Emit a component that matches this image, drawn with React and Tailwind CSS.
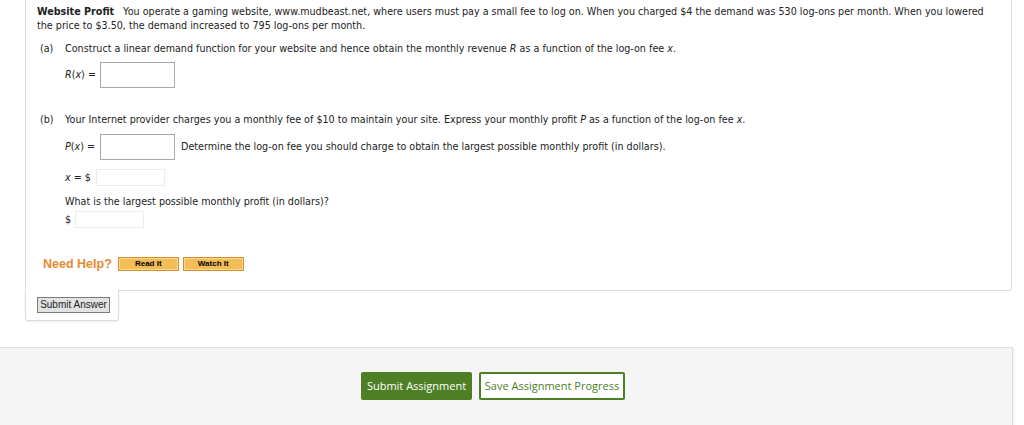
import React from "react";

const V = { fontFamily: '"DejaVu Sans", Verdana, sans-serif' };

export default function App() {
  return (
    <div className="w-[1024px] h-[425px] bg-white overflow-hidden relative">
      <div className="ml-[25px] mr-[12px] -mt-[1px]">
        <div
          className="border border-[#dcdcdc] rounded-b-[3px] h-[292px] bg-white text-[9.6px] leading-[14px] text-[#222]"
          style={V}
        >
          <div className="pl-[11px] pr-[20px] pt-[5px]">
            <p>
              <b className="mr-[9px]">Website Profit</b>
              <span>You operate a gaming website, www.mudbeast.net, where users must pay a small fee to log on. When you charged $4 the demand was 530 log-ons per month. When you lowered the price to $3.50, the demand increased to 795 log-ons per month.</span>
            </p>
            <div className="flex mt-[9px] pl-[3px]">
              <span className="w-[25px] shrink-0">(a)</span>
              <span>
                Construct a linear demand function for your website and hence obtain the monthly revenue <i>R</i> as a function of the log-on fee <i>x</i>.
              </span>
            </div>
            <div className="flex items-center mt-[6px] pl-[28px]">
              <span className="w-[35px]"><i>R</i>(<i>x</i>) =</span>
              <div className="w-[75px] h-[26px] border border-[#a8a8a8]" />
            </div>
            <div className="flex mt-[25px] pl-[3px]">
              <span className="w-[25px] shrink-0">(b)</span>
              <span>
                Your Internet provider charges you a monthly fee of $10 to maintain your site. Express your monthly profit <i>P</i> as a function of the log-on fee <i>x</i>.
              </span>
            </div>
            <div className="flex items-center mt-[7px] pl-[28px]">
              <span className="w-[35px]"><i>P</i>(<i>x</i>) =</span>
              <div className="w-[75px] h-[26px] border border-[#a8a8a8]" />
              <span className="ml-[6px]">Determine the log-on fee you should charge to obtain the largest possible monthly profit (in dollars).</span>
            </div>
            <div className="flex items-center mt-[9px] pl-[28px]">
              <span className="w-[31px]"><i>x</i> = $</span>
              <div className="w-[69px] h-[17px] border border-[#ececec]" />
            </div>
            <p className="mt-[9px] pl-[28px]">What is the largest possible monthly profit (in dollars)?</p>
            <div className="flex items-center mt-[2px] pl-[28px]">
              <span className="w-[10px]">$</span>
              <div className="w-[69px] h-[17px] border border-[#ececec]" />
            </div>
            <div className="flex items-center mt-[29px] pl-[6px]" style={{ fontFamily: '"Liberation Sans", Arial, sans-serif' }}>
              <span className="text-[12.5px] font-bold text-[#e8892f] leading-[14px]">Need Help?</span>
              <button className="ml-[6px] w-[61px] h-[14px] bg-[#f5bd55] border border-[#d68b2e] text-[8px] font-bold text-black leading-[12px] shadow-[inset_0_0_0_1px_#fbd992]">Read It</button>
              <button className="ml-[4px] w-[61px] h-[14px] bg-[#f5bd55] border border-[#d68b2e] text-[8px] font-bold text-black leading-[12px] shadow-[inset_0_0_0_1px_#fbd992]">Watch It</button>
            </div>
          </div>
        </div>
        <div className="relative -mt-[1px] w-[94px] h-[31px] bg-white border border-t-0 border-[#dcdcdc] rounded-b-[3px] shadow-[0_1px_2px_rgba(0,0,0,0.08)]">
          <div className="absolute -top-[1px] left-0 right-0 h-[2px] bg-white" />
          <button
            className="absolute left-[11px] top-[7px] w-[73px] h-[16px] bg-[#e3e3e3] border border-[#7a7a7a] text-[10px] leading-[14px] text-[#222]"
            style={{ fontFamily: '"Liberation Sans", Arial, sans-serif' }}
          >
            Submit Answer
          </button>
        </div>
      </div>
      <div className="mt-[26px] w-[1013px] h-[80px] bg-[#f5f5f5] border-t border-r border-b border-[#dedede] shadow-[1px_1px_2px_rgba(0,0,0,0.08)] flex pt-[24px] pl-[361px]">
        <div className="flex gap-[7px] h-[28px]" style={{ fontFamily: '"Open Sans", sans-serif' }}>
          <button className="w-[111px] h-[28px] bg-[#4e7f24] text-white text-[11px] rounded-[2px]">Submit Assignment</button>
          <button className="w-[146px] h-[28px] bg-white border-2 border-[#4e7f24] text-[#4e7f24] text-[11px] rounded-[2px]">Save Assignment Progress</button>
        </div>
      </div>
    </div>
  );
}
